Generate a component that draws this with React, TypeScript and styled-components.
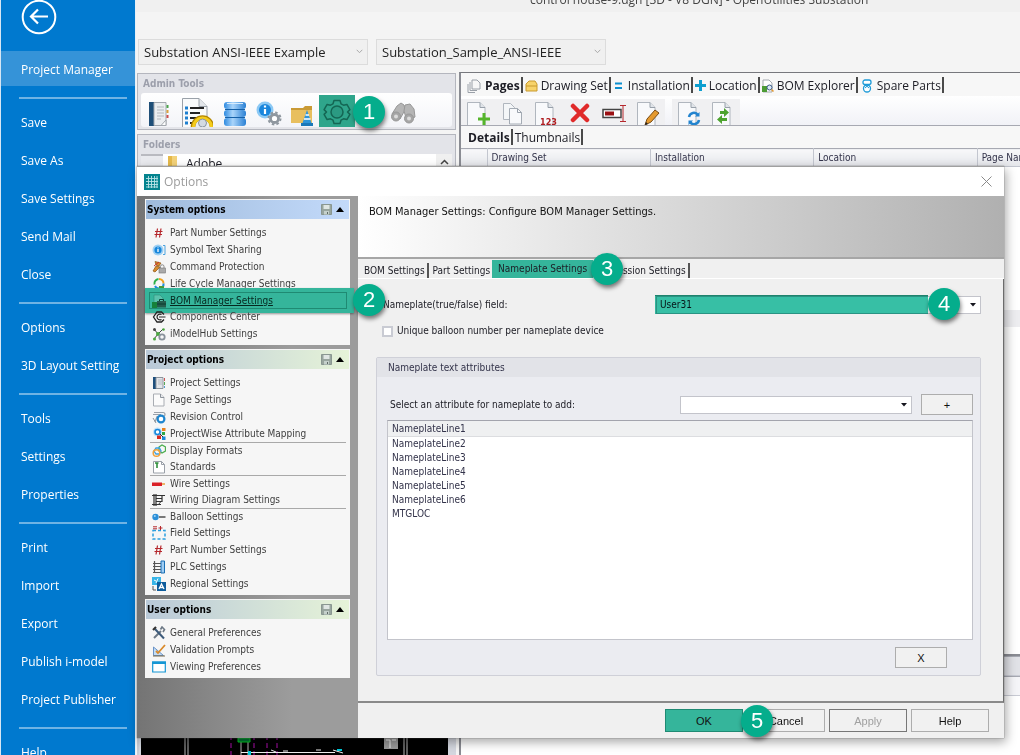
import React from 'react';
import styled, { createGlobalStyle, css } from 'styled-components';

const ui = `"Open Sans", "Noto Sans", sans-serif`;
const small = `"DejaVu Sans Condensed", "DejaVu Sans", sans-serif`;
const teal = '#35b59b';

const GlobalStyle = createGlobalStyle`
  * { box-sizing: border-box; }
  body { margin: 0; background: #f4f4f4; color: #1c1c24; font: 12px/16px ${ui}; }
  button, select, input { font: inherit; color: inherit; margin: 0; }
  ul { list-style: none; margin: 0; padding: 0; }
  svg { display: block; flex: none; }
`;

/* ---------- shell ---------- */

const Shell = styled.div`
  position: relative;
  display: flex;
  height: 100vh;
  min-height: 755px;
  overflow: hidden;
`;

const Backstage = styled.nav`
  flex: 0 0 136px;
  border-left: 1px solid #d6e6f4;
  border-right: 1px solid #e6f0f8;
  background: #0079cf;
  color: #fff;
`;

const BackButton = styled.button`
  display: block;
  height: 51px;
  padding: 0 0 16px 20px;
  border: 0;
  background: none;
`;

const BackLink = styled.a<{ $current?: boolean }>`
  display: flex;
  align-items: center;
  height: ${p => (p.$current ? 35 : 38)}px;
  padding: 2px 0 0 20px;
  background: ${p => (p.$current ? '#3593d8' : 'none')};
  color: #fff;
  text-decoration: none;
  white-space: nowrap;
`;

const BackRule = styled.hr<{ $first?: boolean }>`
  height: 2px;
  margin: ${p => (p.$first ? 11 : 9)}px 8px 4px 18px;
  border: 0;
  background: #6fb3e4;
`;

const Main = styled.main`
  flex: 1;
  min-width: 0;
  display: flex;
  flex-direction: column;
`;

const TitleBar = styled.header`
  display: flex;
  align-items: flex-end;
  height: 12px;
  padding: 0 0 4px 394px;
  background: #f0f0f0;
  color: #444;
  white-space: nowrap;
`;

const ProjectBar = styled.div`
  display: flex;
  gap: 8px;
  padding: 27px 0 7px 2px;
`;

const ProjectSelect = styled.span`
  position: relative;
  width: 230px;
  select {
    width: 100%;
    height: 26px;
    padding: 0 20px 0 5px;
    border: 1px solid #dcdcdc;
    background: #f0f0f0;
    appearance: none;
    font-size: 13px;
    color: #222;
  }
  svg { position: absolute; right: 5px; top: 10px; }
`;

const Workspace = styled.div`
  flex: 1;
  display: flex;
  gap: 3px;
  min-height: 0;
`;

const LeftColumn = styled.div`
  flex: 0 0 320px;
  display: flex;
  flex-direction: column;
  gap: 4px;
  padding: 1px 0 0 1px;
`;

const DockPanel = styled.section<{ $grow?: boolean }>`
  flex: ${p => (p.$grow ? '1' : 'none')};
  padding: 0 3px 2px;
  border: 1px solid #b4b6be;
  background: #e3e4e9;
`;

const DockTitle = styled.h2`
  margin: 0;
  padding-left: 2px;
  font: bold 10px/19px ${small};
  color: #9c9fab;
`;

const AdminTools = styled.div`
  display: flex;
  align-items: flex-start;
  height: 34px;
  border-radius: 3px;
  background: linear-gradient(#fff, #f3f4f8);
`;

const AdminTool = styled.button<{ $width: number; $active?: boolean }>`
  position: relative;
  display: flex;
  justify-content: center;
  align-items: flex-end;
  width: ${p => p.$width}px;
  height: ${p => (p.$active ? 32 : 34)}px;
  margin-top: ${p => (p.$active ? 2 : 0)}px;
  padding: 0;
  border: 0;
  background: ${p => (p.$active ? '#2fa58b' : 'none')};
`;

const FolderTree = styled.div`
  display: flex;
  justify-content: space-between;
  height: 19px;
  background: #fff;
`;

const FolderNode = styled.div`
  display: flex;
  align-items: center;
  gap: 9px;
  padding-left: 0;
  svg { align-self: flex-start; }
`;

const ScrollUp = styled.button`
  display: flex;
  justify-content: center;
  width: 16px;
  padding: 5px 0 0;
  border: 0;
  background: #f0f0f0;
`;

const Preview = styled.div`
  height: 60px;
  margin-top: auto;
  padding: 0 8px 0 2px;
  border-left: 2px solid #c9ccd4;
  background: #d4d7df;
`;

/* ---------- right pane ---------- */

const Pane = styled.section`
  flex: 1;
  min-width: 0;
  display: flex;
  flex-direction: column;
  overflow: hidden;
  border-top: 1px solid #77787d;
  border-left: 2px solid #8a8c93;
  background: #fff;
`;

const TabRow = styled.div<{ $sub?: boolean }>`
  display: flex;
  align-items: center;
  height: ${p => (p.$sub ? 22 : 23)}px;
  padding-left: ${p => (p.$sub ? 5 : 3)}px;
  background: #f7f7f7;
`;

const PaneTab = styled.button<{ $active?: boolean }>`
  display: flex;
  align-items: center;
  gap: 3px;
  height: 16px;
  padding: 2px 1px 0 2px;
  border: 0;
  border-right: 2px solid #4a4a4a;
  background: none;
  white-space: nowrap;
  font-weight: ${p => (p.$active ? 'bold' : 'normal')};
`;

const ToolRow = styled.div`
  display: flex;
  align-items: flex-end;
  height: 30px;
  border-bottom: 1px solid #a7a9b2;
  background: linear-gradient(#fff, #f1f2f7);
`;

const PageTool = styled.button<{ $spaced?: boolean }>`
  display: flex;
  justify-content: center;
  align-items: flex-end;
  width: 34px;
  height: 26px;
  margin-left: ${p => (p.$spaced ? 7 : 0)}px;
  padding: 0;
  border: 0;
  background: #f0f0f2;
`;

const PageTable = styled.table`
  table-layout: fixed;
  width: 680px;
  border-collapse: collapse;
  font: 10px/17px ${small};
  th {
    height: 18px;
    padding: 0 4px;
    border: 1px solid #c3c6cf;
    border-top-color: #a7a9b2;
    border-left: 0;
    background: linear-gradient(#f8f8fa, #e4e6ea);
    font-weight: normal;
    text-align: left;
    color: #33334a;
  }
  td { height: 17px; padding: 0; }
  tbody tr:first-child td { height: 143px; }
  tbody tr:last-child { background: #ededf0; }
`;

const LowerPane = styled.div`
  height: 101px;
  margin-top: auto;
  border-top: 2px solid #8a8c93;
  background: #fff;
`;

const LowerStrip = styled.div<{ $light?: boolean }>`
  height: 20px;
  border-top: 1px solid #a7a9b2;
  border-bottom: 1px solid #c9cbd4;
  background: ${p => (p.$light ? '#f5f5f8' : '#e1e2e7')};
`;

/* ---------- dialog ---------- */

const Dialog = styled.div`
  position: absolute;
  top: 166px;
  left: 137px;
  right: 16px;
  border-top: 1px solid #a0a0a0;
  background: #f0f0f0;
  box-shadow: 0 0 1px #555, 2px 4px 10px rgba(0, 0, 0, 0.35);
`;

const DialogTitle = styled.header`
  display: flex;
  align-items: center;
  gap: 4px;
  height: 29px;
  padding: 0 12px 0 7px;
  background: #fff;
  color: #9b9b9b;
  h1 { flex: 1; margin: 0; font: 12px/16px ${ui}; }
  button { padding: 0; border: 0; background: none; }
`;

const DialogBody = styled.div`
  display: flex;
`;

const Sidebar = styled.aside`
  flex: 0 0 221px;
  display: flex;
  flex-direction: column;
  gap: 4px;
  padding: 3px 8px 0;
  background: linear-gradient(90deg, #747474, #9c9c9c 70%);
`;

const Group = styled.section`
  background: #f6f6f6;
`;

const GroupHead = styled.header<{ $blue?: boolean }>`
  display: flex;
  align-items: center;
  gap: 4px;
  height: 21px;
  padding: 0 5px 0 1px;
  border: 1px solid #f6f6f6;
  background: ${p =>
    p.$blue ? 'linear-gradient(90deg, #9fbbdc, #c3dafa)' : 'linear-gradient(90deg, #b9c9d8, #e6f3d8)'};
  h2 { flex: 1; margin: 0; font: bold 10px/16px ${small}; color: #000; }
`;

const GroupList = styled.ul`
  padding: 4px 4px 3px 5px;
`;

const GroupItem = styled.li<{ $rule?: boolean; $active?: boolean }>`
  position: relative;
  height: ${p => (p.$rule ? 16 : 17)}px;
  ${p => p.$rule && css`border-top: 1px solid #a9a9a9;`}
  a {
    display: flex;
    align-items: center;
    gap: 4px;
    height: 100%;
    padding-left: 2px;
    color: #3e3e3e;
    font: 10px/15px ${small};
    text-decoration: none;
    white-space: nowrap;
  }
  ${p =>
    p.$active &&
    css`
      height: 25px;
      margin: -4px -8px -5px -5px;
      padding: 4px 7px 4px 4px;
      background: ${teal};
      box-shadow: 0 1px 2px rgba(0, 0, 0, 0.4);
      a { border: 1px solid #1f8a73; color: #06281f; text-decoration: underline; }
    `}
`;

const Content = styled.div`
  flex: 1;
  min-width: 0;
`;

const Banner = styled.div`
  height: 63px;
  padding: 8px 11px;
  border-bottom: 2px solid #a6a6a6;
  background: linear-gradient(90deg, #fff, #b0b0b0);
  font: 11px/16px ${small};
  color: #111;
`;

const SettingsTabs = styled.div`
  display: flex;
  align-items: center;
  height: 20px;
  padding-left: 4px;
  border-bottom: 1px solid #fff;
`;

const SettingsTab = styled.button<{ $active?: boolean }>`
  position: relative;
  height: 15px;
  margin-top: 4px;
  padding: 0 2px;
  border: 0;
  border-right: 2px solid #555;
  background: none;
  font: 10px/13px ${small};
  white-space: nowrap;
  & + & { margin-left: 2px; }
  ${p =>
    p.$active &&
    css`
      && { height: 18px; margin: 0 0 0 -2px; padding: 0 6px; border-right: 0; background: ${teal}; }
    `}
`;

const SettingsBody = styled.div`
  padding: 17px 22px 25px 18px;
  border-right: 1px solid #6c6c6c;
  border-bottom: 2px solid #8a8a8a;
  font: 10px/16px ${small};
`;

const FieldRow = styled.div<{ $inset?: boolean }>`
  display: flex;
  align-items: center;
  gap: 9px;
  padding: ${p => (p.$inset ? '0 7px 5px 13px' : '0 0 0 7px')};
  > label { flex: 1; }
`;

const Combo = styled.span<{ $width: number }>`
  position: relative;
  width: ${p => p.$width}px;
  select {
    display: block;
    width: 100%;
    height: 18px;
    padding: 0 20px 0 3px;
    border: 1px solid #c3c4cb;
    background: #fff;
    appearance: none;
  }
  > svg { position: absolute; right: 5px; top: 7px; }
`;

const Highlight = styled.span`
  position: absolute;
  inset: -1px 53px 0 -1px;
  border-top: 1px solid #1f8a73;
  background: #37bfa5;
  mix-blend-mode: multiply;
  pointer-events: none;
`;

const CheckRow = styled.label`
  display: flex;
  align-items: center;
  gap: 4px;
  padding: 9px 0 18px 6px;
  input {
    width: 11px;
    height: 11px;
    border: 2px solid #c9cbd3;
    background: #fff;
    appearance: none;
  }
`;

const AttributeBox = styled.fieldset`
  margin: 0;
  padding: 0 0 7px;
  border: 1px solid #cfd0d8;
  border-radius: 2px;
  background: #ebecf1;
`;

const AttributeTitle = styled.div`
  height: 19px;
  margin-bottom: 17px;
  padding-left: 11px;
  background: #e2e3e8;
  line-height: 19px;
  color: #33334a;
`;

const AttributeList = styled.ul`
  height: 220px;
  margin: 0 7px 7px 10px;
  border: 1px solid #c3c4cb;
  border-top-color: #a3a4ad;
  background: #fff;
`;

const AttributeRow = styled.li<{ $selected?: boolean }>`
  height: ${p => (p.$selected ? 16 : 14)}px;
  padding-left: 4px;
  line-height: ${p => (p.$selected ? 15 : 14)}px;
  color: #33334a;
  ${p => p.$selected && css`border-bottom: 1px solid #dcdde0; background: #eff0f1;`}
`;

const PushButton = styled.button<{ $width: number; $height?: number; $tone?: 'ok' | 'dark' }>`
  position: relative;
  width: ${p => p.$width}px;
  height: ${p => p.$height ?? 23}px;
  padding: 0;
  border: 1px solid ${p => (p.$tone === 'dark' ? '#777' : p.$tone === 'ok' ? '#1f8a73' : '#adadad')};
  background: ${p => (p.$tone === 'ok' ? teal : '#f1f1f1')};
  font: 11px/16px "Liberation Sans", Arial, sans-serif;
  color: ${p => (p.$tone === 'dark' ? '#a0a0a0' : '#111')};
`;

const RemoveRow = styled.div`
  display: flex;
  justify-content: flex-end;
  padding-right: 33px;
`;

const Footer = styled.footer`
  display: flex;
  justify-content: flex-end;
  gap: 4px;
  padding: 6px 15px;
`;

const Badge = styled.span<{ $left: number; $top: number }>`
  position: absolute;
  z-index: 2;
  left: ${p => p.$left}px;
  top: ${p => p.$top}px;
  width: 32px;
  height: 32px;
  border-radius: 50%;
  background: #05ad8c;
  box-shadow: 1px 3px 4px rgba(0, 0, 0, 0.5);
  font: 22px/32px "Liberation Sans", Arial, sans-serif;
  color: #fff;
  text-align: center;
  text-decoration: none;
`;

/* ---------- icons ---------- */

type IconName =
  | 'hash' | 'share' | 'command' | 'cycle' | 'bom' | 'components' | 'hub' | 'book' | 'page' | 'revision'
  | 'mapping' | 'formats' | 'standards' | 'wire' | 'diagram' | 'balloon' | 'field' | 'plc' | 'regional'
  | 'tools' | 'validate' | 'window';

const glyphs: Record<IconName, React.ReactNode> = {
  hash: <path d="M5.5 2.500 4 11.500M9 2.500 7.500 11.500M3 5.500h7.500M2.500 8.500H10" stroke="#b5282d" strokeWidth="1.200" fill="none" />,
  share: (
    <>
      <circle cx="6" cy="7" r="5.500" fill="#9fd0f3" />
      <circle cx="6" cy="7" r="3.600" fill="#1787dc" />
      <path d="M6 6v3M6 4.500v.8" stroke="#fff" strokeWidth="1.300" />
      <path d="M11 2.500h2v9h-2" stroke="#4aa3df" fill="none" />
    </>
  ),
  command: (
    <>
      <path d="M3 1.500 9 3 7 6 4 5zM4 6l4 1-5 5-2-1z" fill="#d98a2b" stroke="#8a5414" strokeWidth=".7" />
      <path d="m2 6 5-4" stroke="#c33" />
      <rect x="7" y="8" width="6.500" height="5" fill="#aaa" stroke="#777" strokeWidth=".6" />
      <path d="M8.500 8V6.500a1.700 1.700 0 0 1 3.500 0V8" stroke="#888" fill="none" />
    </>
  ),
  cycle: (
    <>
      <path d="M2.500 7.500a4.500 4.500 0 0 1 4-5.500" stroke="#2fb04a" strokeWidth="2" fill="none" />
      <path d="M7 2a4.500 4.500 0 0 1 4.500 4.500" stroke="#f0a020" strokeWidth="2" fill="none" />
      <path d="M11.500 6.500A4.500 4.500 0 0 1 3 9" stroke="#1e8fe0" strokeWidth="2" fill="none" />
      <path d="M7 9h5v4H7z" fill="#4b9b3a" />
    </>
  ),
  bom: (
    <>
      <path d="M2 1h6l3 3v8H2z" fill="#5bc2ac" stroke="#2d8f7a" strokeWidth=".6" />
      <path d="M0 8h5v6H0z" fill="#16813a" />
      <path d="M5 7h9v6.500H5z" fill="#255c4d" />
      <path d="M7.500 7V5.500h4V7M5 10h9" stroke="#0b3a2e" fill="none" />
    </>
  ),
  components: (
    <>
      <path d="M12 4.500 9.500 2H5L1.500 7 5 12h4.500L12 9.500" stroke="#222" strokeWidth="1.300" fill="none" />
      <path d="M13.500 7H7M9.500 4.500A3 3 0 0 0 5 7a3 3 0 0 0 4.500 2.500" stroke="#222" strokeWidth="1.200" fill="none" />
    </>
  ),
  hub: (
    <>
      <path d="m2 2 4 5-4 5M6 7l5-5" stroke="#444" fill="none" />
      <circle cx="2.500" cy="2.500" r="1.500" fill="#444" />
      <circle cx="6" cy="7" r="2" fill="#4aa83f" />
      <circle cx="2.500" cy="12" r="1.500" fill="#4aa83f" />
      <circle cx="11.500" cy="2.500" r="1.300" fill="#4aa83f" />
      <circle cx="10" cy="10" r="2.700" stroke="#8a939c" strokeWidth="1.800" fill="none" />
    </>
  ),
  book: (
    <>
      <path d="M1 1h3v12H1z" fill="#1d4e7c" />
      <path d="M4 1.500h7v11H4z" fill="#e3e6ea" stroke="#8d949c" />
      <path d="M6 4h4M6 6h4M6 8h4" stroke="#a5abb3" strokeWidth=".7" />
      <path d="M12.500 2v3" stroke="#c55" /><path d="M12.500 6v3" stroke="#5a5" /><path d="M12.500 10v2" stroke="#59c" />
    </>
  ),
  page: (
    <>
      <path d="M1.500 1h7l3.500 3.500V13H1.500z" fill="#fbfbfb" stroke="#a9adb3" />
      <path d="M8.500 1v3.500H12" stroke="#8d949c" fill="#e8eaed" />
    </>
  ),
  revision: (
    <>
      <path d="M2 2.500h9a2 2 0 0 1 0 4H5L3 12M1 4.500h8" stroke="#9aa0a8" strokeWidth="1.200" fill="none" />
      <circle cx="9" cy="9" r="3.400" stroke="#1e86cf" strokeWidth="2.200" fill="#fff" />
      <path d="m1 8 3 5" stroke="#8d949c" />
    </>
  ),
  mapping: (
    <>
      <circle cx="5.500" cy="5" r="4.500" fill="#bfe0f8" />
      <circle cx="5.500" cy="5" r="2.500" stroke="#1787dc" strokeWidth="1.600" fill="#fff" />
      <path d="M10 1h3.500v3H10z" fill="#e8821e" />
      <path d="M10 5h3v3h-3z" fill="#2aa84a" />
      <path d="M5 8.500h4v3.500H5z" fill="#d8281e" /><path d="M10 9.500h3.500V13H10z" fill="#1787dc" />
      <path d="m8 7 3 3" stroke="#333" />
    </>
  ),
  formats: (
    <>
      <path d="m7 3 3-2 3.500 2v4L10 9 7 7z" stroke="#4cae4f" strokeWidth="1.300" fill="none" />
      <path d="M4 4h3.500l1.500 3-1.500 3H4L2 7z" stroke="#3c9fe0" strokeWidth="1.300" fill="none" />
      <circle cx="4.500" cy="9" r="3.300" stroke="#f0a13a" strokeWidth="1.500" fill="none" />
    </>
  ),
  standards: (
    <>
      <path d="M1.500 1.500h8l3 3V13h-11z" fill="#fff" stroke="#9aa0a8" />
      <path d="M9.500 1.500v3h3" stroke="#9aa0a8" fill="none" />
      <path d="M3 3h3.500M5 3v5" stroke="#2f8f3a" strokeWidth="1.600" />
    </>
  ),
  wire: <><path d="M0 5.500h10v3.500H0z" fill="#da2128" /><path d="M10 7h3" stroke="#e9a13b" strokeWidth="1.500" /></>,
  diagram: (
    <>
      <path d="M2 1v12M4 1v12M0 2.500h13M0 11.500h9M10 2v7M4 5.500h6M4 8.500h6" stroke="#333" strokeWidth="1.200" fill="none" />
      <path d="M9 8.500 6 12" stroke="#333" />
    </>
  ),
  balloon: <><circle cx="3.500" cy="7" r="3.200" fill="#2b8fd8" /><circle cx="2.800" cy="6" r="1" fill="#9fd3f5" /><path d="M7 7h6.500" stroke="#333" strokeWidth="1.300" /></>,
  field: (
    <>
      <path d="M1 4.500h12V13H1z" stroke="#2b9fe0" strokeWidth="1.500" strokeDasharray="3 2" fill="none" />
      <path d="M1 .8h4M1 2.800h4M6.500 2h4M8.500 0v4" stroke="#b5282d" />
    </>
  ),
  plc: (
    <>
      <path d="M2.500 1v12M1 3.500h9M1 6.500h9M1 9.500h9M1 12.500h9" stroke="#555" fill="none" strokeWidth="1.200" />
      <path d="M9 1h3.500v12H9z" fill="#9fcdf3" stroke="#1a6fb5" />
    </>
  ),
  regional: (
    <>
      <path d="M0 0h9v8H0z" fill="#37b5e8" /><path d="m2 3 2 1M6 1.500 4 6" stroke="#fff" />
      <path d="M5 5h9v9H5z" fill="#0d5c9c" />
      <path d="m7 12 2.500-5L12 12M8 10.500h3" stroke="#fff" strokeWidth="1.300" fill="none" />
      <path d="M1 9v4h3" stroke="#555" fill="none" />
    </>
  ),
  tools: (
    <>
      <path d="m2 12 7-7" stroke="#6c7885" strokeWidth="2" /><path d="m3 3 9 9.500" stroke="#3c5a7a" strokeWidth="2" />
      <path d="M8.500 3.500 10 1l2.500 2.500L11 6" stroke="#6c7885" strokeWidth="1.600" fill="none" />
      <path d="m1 4 3-3" stroke="#333" strokeWidth="2.200" />
    </>
  ),
  validate: (
    <>
      <path d="M1.500 4v8.500h10z" fill="#c3dcf5" stroke="#6a93c7" />
      <path d="m4 8 2 2 7-8" stroke="#d98a2b" strokeWidth="1.800" fill="none" />
      <path d="M1 13h12" stroke="#7a6a4a" />
    </>
  ),
  window: <><path d="M.7 2h12.600v10H.7z" fill="#fff" stroke="#1496d4" strokeWidth="1.200" /><path d="M0 1.500h14V4H0z" fill="#1496d4" /></>,
};

const Icon = ({ name, size = 14 }: { name: IconName; size?: number }) => (
  <svg width={size} height={size} viewBox="0 0 14 14" aria-hidden="true">{glyphs[name]}</svg>
);

const Floppy = () => (
  <svg width="11" height="11" viewBox="0 0 11 11" aria-hidden="true">
    <path d="M.5.500h10v10H.5z" fill="#98a59e" stroke="#8a9791" />
    <path d="M2.500 1h6v4h-6z" fill="#dfe6e3" /><path d="M3 7h5v3.500H3z" fill="#c5d0cb" /><path d="M6 8h1v2H6z" fill="#5f6b66" />
  </svg>
);

const Chevron = () => (
  <svg width="7" height="5" viewBox="0 0 7 5" aria-hidden="true"><path d="m.7.8 2.800 2.900L6.300.8" stroke="#aaa" fill="none" /></svg>
);

const Drop = () => (
  <svg width="6" height="4" viewBox="0 0 6 4" aria-hidden="true"><path d="M0 0h6L3 3.500z" fill="#16161e" /></svg>
);

const Sheet = ({ children }: { children?: React.ReactNode }) => (
  <svg width="26" height="24" viewBox="0 0 26 24" aria-hidden="true">
    <path d="M2.500 1.500H15l5 5V26H2.500z" fill="#f8f9fb" stroke="#b0b6be" />
    <path d="M15 1.500v5h5" fill="#e0e4e9" stroke="#98a0aa" />
    {children}
  </svg>
);

/* ---------- data ---------- */

const backstage: string[][] = [
  ['Save', 'Save As', 'Save Settings', 'Send Mail', 'Close'],
  ['Options', '3D Layout Setting'],
  ['Tools', 'Settings', 'Properties'],
  ['Print', 'Import', 'Export', 'Publish i-model', 'Project Publisher'],
  ['Help'],
];

type Entry = { icon: IconName; label: string; rule?: boolean; active?: boolean };

const groups: { title: string; blue?: boolean; items: Entry[] }[] = [
  {
    title: 'System options',
    blue: true,
    items: [
      { icon: 'hash', label: 'Part Number Settings' },
      { icon: 'share', label: 'Symbol Text Sharing' },
      { icon: 'command', label: 'Command Protection' },
      { icon: 'cycle', label: 'Life Cycle Manager Settings' },
      { icon: 'bom', label: 'BOM Manager Settings', active: true },
      { icon: 'components', label: 'Components Center' },
      { icon: 'hub', label: 'iModelHub Settings' },
    ],
  },
  {
    title: 'Project options',
    items: [
      { icon: 'book', label: 'Project Settings' },
      { icon: 'page', label: 'Page Settings' },
      { icon: 'revision', label: 'Revision Control' },
      { icon: 'mapping', label: 'ProjectWise Attribute Mapping' },
      { icon: 'formats', label: 'Display Formats', rule: true },
      { icon: 'standards', label: 'Standards' },
      { icon: 'wire', label: 'Wire Settings', rule: true },
      { icon: 'diagram', label: 'Wiring Diagram Settings' },
      { icon: 'balloon', label: 'Balloon Settings', rule: true },
      { icon: 'field', label: 'Field Settings' },
      { icon: 'hash', label: 'Part Number Settings' },
      { icon: 'plc', label: 'PLC Settings' },
      { icon: 'regional', label: 'Regional Settings' },
    ],
  },
  {
    title: 'User options',
    items: [
      { icon: 'tools', label: 'General Preferences' },
      { icon: 'validate', label: 'Validation Prompts' },
      { icon: 'window', label: 'Viewing Preferences' },
    ],
  },
];

const attributes = [
  'NameplateLine1', 'NameplateLine2', 'NameplateLine3', 'NameplateLine4', 'NameplateLine5', 'NameplateLine6', 'MTGLOC',
];

/* Six rounded lobes around the hub. */
const gearPath =
  'M10 1.500h6l1 3.300 2.500 1.400 3.400-.8 3 5.200-2.400 2.400v0l2.400 2.400-3 5.200-3.400-.8L17 21.200l-1 3.300h-6l-1-3.300-2.500-1.400-3.400.8-3-5.200L2.500 13 .1 10.600l3-5.200 3.400.8L9 4.800z';

const AdminToolbar = () => (
  <AdminTools>
    <AdminTool $width={36} aria-label="Notebook">
      <svg width="22" height="28" viewBox="0 0 22 28">
        <path d="M1 3h5v24H1z" fill="#1f4f78" />
        <path d="M6 3.500h12v23H6z" fill="#eceef0" stroke="#a3a8ae" />
        <path d="M9 8h7M9 11h7M9 14h7M9 17h7M9 20h4" stroke="#b4b8bd" />
        <path d="M18 21v5.500h-5z" fill="#fff" stroke="#a3a8ae" />
        <path d="M19.500 6v3" stroke="#4aa34a" strokeWidth="2" /><path d="M19.500 11v3" stroke="#d9a13b" strokeWidth="2" /><path d="M19.500 16v3" stroke="#cc4b4b" strokeWidth="2" />
      </svg>
    </AdminTool>
    <AdminTool $width={40} aria-label="Report designer">
      <svg width="32" height="30" viewBox="0 0 32 30">
        <path d="M1.500 1.500H18l8 8V32H1.500z" fill="#f9fafb" stroke="#9aa1a9" /><path d="M18 1.500v8h8" fill="#e3e6ea" stroke="#9aa1a9" />
        <path d="M4 11h3M4 16h3M4 21h3M4 26h3" stroke="#1c7fd0" strokeWidth="3" />
        <path d="M9 11h14M9 16h10M9 21h7M9 26h5" stroke="#222" strokeWidth="2" />
        <path d="M12 30a9.500 9.500 0 0 1 19 0" stroke="#b38600" strokeWidth="4.500" fill="#e9edf2" />
        <path d="M12.500 30a9 9 0 0 1 18 0" stroke="#f5cc1b" strokeWidth="3" fill="none" />
        <circle cx="21.500" cy="26" r="4" fill="#d3dae2" stroke="#8a949f" />
      </svg>
    </AdminTool>
    <AdminTool $width={36} aria-label="Database">
      <svg width="22" height="27" viewBox="0 0 22 27">
        <defs>
          <linearGradient id="db"><stop offset="0" stopColor="#2f8be0" /><stop offset=".4" stopColor="#a9d4fa" /><stop offset="1" stopColor="#2a80d4" /></linearGradient>
        </defs>
        <rect y="2" width="22" height="7" rx="3" fill="url(#db)" /><rect y="10" width="22" height="7" rx="3" fill="url(#db)" /><rect y="18" width="22" height="8" rx="3" fill="url(#db)" />
        <path d="M1 9.500h20M1 17.500h20" stroke="#1560a8" /><path d="M3 3.500h16" stroke="#d6ebfd" />
      </svg>
    </AdminTool>
    <AdminTool $width={32} aria-label="Information settings">
      <svg width="26" height="27" viewBox="0 0 26 27">
        <circle cx="9" cy="10" r="8.500" fill="#8cc9f4" /><circle cx="9" cy="10" r="6" fill="#1a86dc" />
        <path d="M9 9v5M9 5.500v2" stroke="#fff" strokeWidth="2.200" />
        <circle cx="18.500" cy="18.500" r="4" stroke="#8f979f" strokeWidth="2.800" fill="#fff" />
        <circle cx="18.500" cy="18.500" r="6" stroke="#8f979f" strokeWidth="2" strokeDasharray="2.500 2.200" fill="none" />
      </svg>
    </AdminTool>
    <AdminTool $width={34} aria-label="Folder">
      <svg width="24" height="26" viewBox="0 0 24 26">
        <path d="M1 7h12l2-2h7v17H1z" fill="#c99a35" /><path d="M1 9h21v13H1z" fill="#e8bf5e" />
        <path d="m17 9 4.500 13h-9z" fill="#2f95d8" /><path d="M15.500 14h3.500M14 18h6.500" stroke="#fff" strokeWidth="1.500" /><path d="M11 22h12v3H11z" fill="#1b78b8" />
      </svg>
    </AdminTool>
    <AdminTool $width={36} $active aria-label="Options">
      <svg width="28" height="30" viewBox="-1 -2 28 30">
        <path d={gearPath} fill="none" stroke="#146653" strokeWidth="1.500" strokeLinejoin="round" />
        <circle cx="13" cy="13" r="6" fill="#2b9a82" stroke="#146653" strokeWidth="1.500" />
      </svg>
      <Badge $left={34} $top={1}>1</Badge>
    </AdminTool>
    <AdminTool $width={30} aria-label="Library" />
    <AdminTool $width={36} aria-label="Search">
      <svg width="26" height="29" viewBox="0 0 26 29">
        <g fill="#b5b5b5" stroke="#989898">
          <path d="m7 8 4-3 3 2 1 5-5 9-8-5z" /><path d="m15 7 5-1 4 5 1 8-8 4-3-10z" />
          <circle cx="6" cy="18.500" r="4.500" fill="#a6a6a6" /><circle cx="19" cy="20.500" r="4.500" fill="#a6a6a6" />
        </g>
        <circle cx="6" cy="18.500" r="2" fill="#dcdcdc" /><circle cx="19" cy="20.500" r="2" fill="#dcdcdc" />
      </svg>
    </AdminTool>
  </AdminTools>
);

const PageToolbar = () => (
  <ToolRow>
    <PageTool aria-label="New page"><Sheet><path d="M19 12v12M13 18h12" stroke="#55b52b" strokeWidth="3" /></Sheet></PageTool>
    <PageTool aria-label="Copy page">
      <svg width="24" height="24" viewBox="0 0 24 24">
        <path d="M3.500 2.500h7l4 4v12h-11z" fill="#f4f6f8" stroke="#b0b6be" /><path d="M9.500 7.500h8l4 4V23h-12z" fill="#f8f9fb" stroke="#a4abb4" /><path d="M17.500 7.500v4h4" fill="none" stroke="#98a0aa" />
      </svg>
    </PageTool>
    <PageTool aria-label="Renumber"><Sheet><text x="7" y="24" fontFamily="DejaVu Sans Condensed, sans-serif" fontWeight="bold" fontSize="9" fill="#b01e22">123</text></Sheet></PageTool>
    <PageTool aria-label="Delete"><svg width="20" height="23" viewBox="0 0 20 23"><path d="m3 4 14 14M17 4 3 18" stroke="#e02a2a" strokeWidth="4.500" strokeLinecap="round" /></svg></PageTool>
    <PageTool aria-label="Rename">
      <svg width="24" height="22" viewBox="0 0 24 22"><path d="M1 6.500h18v8H1z" fill="#fff" stroke="#444" strokeWidth="1.500" /><path d="M3 8.500h9v4H3z" fill="#9b1114" /><path d="M21 3v15M18 2.500h6M18 18.500h6" stroke="#b5282d" /></svg>
    </PageTool>
    <PageTool aria-label="Edit"><Sheet><path d="m10 24 2-6L20 9l4 3-8 9z" fill="#e59a2f" stroke="#7a4c14" /><path d="m10 24 1-3 2 2z" fill="#222" /></Sheet></PageTool>
    <PageTool $spaced aria-label="Refresh">
      <Sheet><path d="M13 16a5 5 0 0 1 9-2M23 19a5 5 0 0 1-9 2" stroke="#2384cf" strokeWidth="2.500" fill="none" /><path d="M23.500 11v4.500H19zM12.500 24v-4.500H17z" fill="#2384cf" /></Sheet>
    </PageTool>
    <PageTool aria-label="Transfer">
      <Sheet><path d="M10 10h4V7l5 4.500-5 4.500v-3h-4zM17 17h-5v-3l-5 4.500 5 4.500v-3h5z" fill="#4da32f" /></Sheet>
    </PageTool>
  </ToolRow>
);

const OptionsDialog = () => (
  <Dialog role="dialog" aria-label="Options">
    <DialogTitle>
      <svg width="16" height="16" viewBox="0 0 16 16" aria-hidden="true">
        <path d="M0 0h16v16H0z" fill="#04848f" />
        <path d="M4.500 2v12M7.500 2v12M10.500 2v12M13 2v12M2 4.500h12M2 7.500h12M2 10.500h12M2 13h12" stroke="#b9e3e5" strokeWidth=".9" />
      </svg>
      <h1>Options</h1>
      <button aria-label="Close">
        <svg width="11" height="11" viewBox="0 0 11 11"><path d="m.5.500 10 10M10.500.5l-10 10" stroke="#8a8a8a" /></svg>
      </button>
    </DialogTitle>
    <DialogBody>
      <Sidebar>
        {groups.map(g => (
          <Group key={g.title}>
            <GroupHead $blue={g.blue}>
              <h2>{g.title}</h2>
              <Floppy />
              <svg width="8" height="5" viewBox="0 0 8 5" aria-hidden="true"><path d="m0 5 4-5 4 5z" fill="#000" /></svg>
            </GroupHead>
            <GroupList>
              {g.items.map((it, i) => (
                <GroupItem key={i} $rule={it.rule} $active={it.active}>
                  <a href="#settings"><Icon name={it.icon} />{it.label}</a>
                  {it.active && <Badge $left={208} $top={-4}>2</Badge>}
                </GroupItem>
              ))}
            </GroupList>
          </Group>
        ))}
      </Sidebar>
      <Content>
        <Banner>BOM Manager Settings: Configure BOM Manager Settings.</Banner>
        <SettingsTabs>
          <SettingsTab>BOM Settings</SettingsTab>
          <SettingsTab>Part Settings</SettingsTab>
          <SettingsTab $active>Nameplate Settings<Badge $left={99} $top={-7}>3</Badge></SettingsTab>
          <SettingsTab>Expression Settings</SettingsTab>
        </SettingsTabs>
        <SettingsBody>
          <FieldRow>
            <label htmlFor="nameplate-field">Nameplate(true/false) field:</label>
            <Combo $width={325}>
              <select id="nameplate-field" defaultValue="User31"><option>User31</option></select>
              <Drop />
              <Highlight />
              <Badge $left={272} $top={-8}>4</Badge>
            </Combo>
          </FieldRow>
          <CheckRow><input type="checkbox" />Unique balloon number per nameplate device</CheckRow>
          <AttributeBox aria-label="Nameplate text attributes">
            <AttributeTitle>Nameplate text attributes</AttributeTitle>
            <FieldRow $inset>
              <label htmlFor="attribute">Select an attribute for nameplate to add:</label>
              <Combo $width={232}>
                <select id="attribute" defaultValue=""><option value=""></option></select>
                <Drop />
              </Combo>
              <PushButton $width={52} $height={21}>+</PushButton>
            </FieldRow>
            <AttributeList role="listbox" aria-label="Attributes">
              {attributes.map((a, i) => (
                <AttributeRow key={a} role="option" aria-selected={i === 0} $selected={i === 0}>{a}</AttributeRow>
              ))}
            </AttributeList>
            <RemoveRow><PushButton $width={52} $height={21}>X</PushButton></RemoveRow>
          </AttributeBox>
        </SettingsBody>
        <Footer>
          <PushButton $width={78} $tone="ok">OK<Badge $left={75} $top={-5}>5</Badge></PushButton>
          <PushButton $width={78}>Cancel</PushButton>
          <PushButton $width={78} $tone="dark">Apply</PushButton>
          <PushButton $width={78}>Help</PushButton>
        </Footer>
      </Content>
    </DialogBody>
  </Dialog>
);

export default function App() {
  return (
    <>
      <GlobalStyle />
      <Shell>
        <Backstage>
          <BackButton aria-label="Back">
            <svg width="36" height="35" viewBox="0 0 36 35">
              <circle cx="18" cy="17" r="16.300" stroke="#fff" strokeWidth="2" fill="none" />
              <path d="M27 16.500H10.500M17 9.500l-7 7 7 7" stroke="#fff" strokeWidth="2.200" fill="none" />
            </svg>
          </BackButton>
          <BackLink href="#manager" $current>Project Manager</BackLink>
          {backstage.map((section, i) => (
            <React.Fragment key={i}>
              <BackRule $first={i === 0} />
              {section.map(s => <BackLink key={s} href="#item">{s}</BackLink>)}
            </React.Fragment>
          ))}
        </Backstage>
        <Main>
          <TitleBar>control house-9.dgn [3D - V8 DGN] - OpenUtilities Substation</TitleBar>
          <ProjectBar>
            <ProjectSelect><select aria-label="Project"><option>Substation ANSI-IEEE Example</option></select><Chevron /></ProjectSelect>
            <ProjectSelect><select aria-label="Sample"><option>Substation_Sample_ANSI-IEEE</option></select><Chevron /></ProjectSelect>
          </ProjectBar>
          <Workspace>
            <LeftColumn>
              <DockPanel>
                <DockTitle>Admin Tools</DockTitle>
                <AdminToolbar />
              </DockPanel>
              <DockPanel $grow>
                <DockTitle>Folders</DockTitle>
                <FolderTree>
                  <FolderNode>
                    <svg width="36" height="18" viewBox="0 0 36 18" aria-hidden="true">
                      <path d="M0 0h22v18H0z" fill="#e9eaee" /><path d="M0 1h22" stroke="#b9bac0" strokeWidth="2" />
                      <path d="M27 2h9v14h-9z" fill="#f3d27a" /><path d="M27 2h4v14h-4z" fill="#e5b94a" />
                    </svg>
                    Adobe
                  </FolderNode>
                  <ScrollUp aria-label="Scroll up"><svg width="9" height="6" viewBox="0 0 9 6"><path d="m1 5 3.500-3.500L8 5" stroke="#444" strokeWidth="1.500" fill="none" /></svg></ScrollUp>
                </FolderTree>
              </DockPanel>
              <Preview>
                <svg width="100%" height="60" viewBox="0 0 307 60" preserveAspectRatio="xMinYMin slice" aria-hidden="true">
                  <path d="M0 0h320v60H0z" fill="#000" />
                  <path d="M44 40v20M47 40v20M263 40v20M266 40v20M100 45v15M107 45v15" stroke="#bbb" />
                  <path d="M90 40v20M113 40v20M126 40v20M136 40v20" stroke="#b010b0" strokeDasharray="5 3" />
                  <path d="M97 43h12v4H97z" fill="#073" stroke="#0c2" />
                  <path d="M100 57.500h94M130 55l5 2M142 56h5M175 55h5M192 55l10 3" stroke="#eee" />
                  <path d="M107 56h3v4h-3zM196 54h5v2h-5z" fill="#0cd" />
                  <path d="M243 43h14v11h-14z" fill="#999" /><path d="M245 45h4v8M251 45h4" stroke="#eee" fill="none" />
                </svg>
              </Preview>
            </LeftColumn>
            <Pane>
              <TabRow>
                <PaneTab $active>
                  <svg width="16" height="14" viewBox="0 0 16 14"><path d="M6 1h5l3 3v6H6zM4 3v8.500h7M2 5v8.500h7" fill="none" stroke="#9aa0a8" /></svg>
                  Pages
                </PaneTab>
                <PaneTab>
                  <svg width="13" height="12" viewBox="0 0 13 12"><path d="M1 4l3-3h6l2 3v7H1z" fill="#f7d36b" stroke="#c99a2e" /><path d="M1 6h11" stroke="#c99a2e" /></svg>
                  Drawing Set
                </PaneTab>
                <PaneTab>
                  <svg width="12" height="12" viewBox="0 0 12 12"><path d="M2 3.500h7M2 8h7" stroke="#0d8fd0" strokeWidth="2" /></svg>
                  Installation
                </PaneTab>
                <PaneTab>
                  <svg width="11" height="12" viewBox="0 0 11 12"><path d="M5.500 0v11M0 5.500h11" stroke="#0d9fd0" strokeWidth="3" /></svg>
                  Location
                </PaneTab>
                <PaneTab>
                  <svg width="12" height="14" viewBox="0 0 12 14"><path d="M1 1h6l3 3v9H1z" fill="#fff" stroke="#a4a9af" /><path d="M0 7h5v6H0z" fill="#4c9b34" /><circle cx="7.500" cy="8.500" r="2.500" fill="#dbe9f6" stroke="#3a5a86" /><path d="m9.500 10.500 2 2" stroke="#e59a2f" strokeWidth="1.500" /></svg>
                  BOM Explorer
                </PaneTab>
                <PaneTab>
                  <svg width="14" height="14" viewBox="0 0 14 14"><rect x="3" y="1" width="8" height="4.500" rx="2" fill="#fff" stroke="#1c9ad8" strokeWidth="1.300" /><circle cx="7" cy="9.500" r="3.500" fill="#fff" stroke="#1c9ad8" strokeWidth="1.300" /><path d="M5 5.500 9 9M9 5.500 5 9" stroke="#1c9ad8" /></svg>
                  Spare Parts
                </PaneTab>
              </TabRow>
              <PageToolbar />
              <TabRow $sub>
                <PaneTab $active>Details</PaneTab>
                <PaneTab>Thumbnails</PaneTab>
              </TabRow>
              <PageTable>
                <colgroup><col style={{ width: 26 }} /><col /><col /><col /><col /></colgroup>
                <thead>
                  <tr><th></th><th>Drawing Set</th><th>Installation</th><th>Location</th><th>Page Name</th></tr>
                </thead>
                <tbody><tr><td colSpan={5} /></tr><tr><td colSpan={5} /></tr></tbody>
              </PageTable>
              <LowerPane><LowerStrip /><LowerStrip $light /></LowerPane>
            </Pane>
          </Workspace>
        </Main>
        <OptionsDialog />
      </Shell>
    </>
  );
}
